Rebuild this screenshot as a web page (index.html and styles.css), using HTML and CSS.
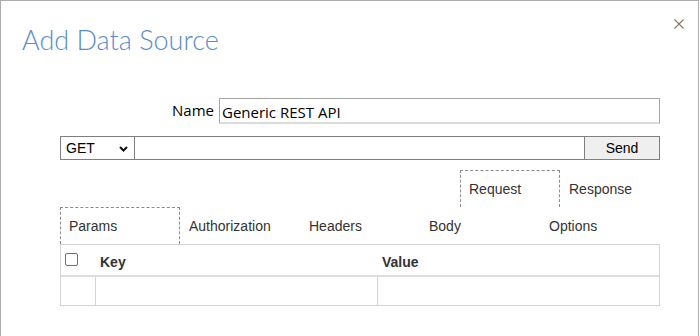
FILE: index.html
```html
<!DOCTYPE html>
<html lang="en">
<head>
<meta charset="utf-8">
<title>Add Data Source</title>
<link rel="stylesheet" href="styles.css">
</head>
<body>
<div class="dialog">
  <div class="header">
    <h1 class="title">Add Data Source</h1>
    <svg class="close" width="10" height="10" viewBox="0 0 10 10" aria-label="Close">
      <path d="M0.5 0.5 L9.5 9.5 M9.5 0.5 L0.5 9.5" stroke="#8a7562" stroke-width="1.1" fill="none"/>
    </svg>
  </div>
  <div class="content">
    <div class="name-row">
      <label class="name-label">Name</label>
      <div class="name-field">Generic REST API</div>
    </div>
    <div class="url-row">
      <div class="method">
        <span class="method-text">GET</span>
        <svg class="chevron" width="9" height="6" viewBox="0 0 9 6">
          <path d="M1 1 L4.5 4.5 L8 1" stroke="#111" stroke-width="2" fill="none"/>
        </svg>
      </div>
      <div class="url-field"></div>
      <div class="send">Send</div>
    </div>
    <div class="pane-tabs">
      <div class="tab tab-small active">Request</div>
      <div class="tab tab-small">Response</div>
    </div>
    <div class="req-tabs">
      <div class="tab active">Params</div>
      <div class="tab">Authorization</div>
      <div class="tab">Headers</div>
      <div class="tab">Body</div>
      <div class="tab">Options</div>
    </div>
    <div class="grid">
      <div class="hcell check-cell"><span class="checkbox"></span></div>
      <div class="hcell">Key</div>
      <div class="hcell">Value</div>
      <div class="dcell first"></div>
      <div class="dcell"></div>
      <div class="dcell"></div>
    </div>
  </div>
</div>
</body>
</html>
```
FILE: styles.css
```css
html, body {
  margin: 0;
  padding: 0;
  background: #ffffff;
}

.dialog {
  width: 699px;
  height: 336px;
  box-sizing: border-box;
  border: 1px solid #ababab;
  border-bottom: none;
  overflow: hidden;
}

.header {
  display: flex;
  justify-content: space-between;
  align-items: flex-start;
  padding: 18px 14px 0 21px;
}

.title {
  margin: 5px 0 0 0;
  font-family: "Lato", "Open Sans", sans-serif;
  font-weight: 300;
  font-size: 27px;
  line-height: 32px;
  color: #5a8dc8;
}

.close {
  display: block;
}

.content {
  margin: 42px 38px 0 59px;
}

.name-row {
  display: flex;
  justify-content: flex-end;
  align-items: flex-start;
  gap: 5px;
  height: 26px;
}

.name-label {
  margin-top: 2px;
  font-family: "Open Sans", sans-serif;
  font-size: 15px;
  line-height: 20px;
  color: #000;
}

.name-field {
  width: 441px;
  height: 26px;
  box-sizing: border-box;
  border: 1px solid #a6a6a6;
  border-bottom: 2px solid #dadada;
  padding: 3px 2px 0 2px;
  font-family: "Open Sans", sans-serif;
  font-size: 15px;
  line-height: 20px;
  color: #000;
}

.url-row {
  display: flex;
  margin-top: 12px;
  height: 24px;
  box-sizing: border-box;
  border: 1px solid #7f7f7f;
  font-family: "Liberation Sans", Arial, sans-serif;
  font-size: 14px;
  color: #000;
}

.method {
  width: 73px;
  display: flex;
  align-items: center;
  justify-content: space-between;
  padding: 0 6px 0 5px;
  box-sizing: border-box;
  line-height: 16px;
}

.chevron {
  display: block;
  margin-top: 1px;
}

.url-field {
  flex: 1;
  border-left: 1px solid #7f7f7f;
}

.send {
  width: 74px;
  border-left: 1px solid #7f7f7f;
  background: #efefef;
  text-align: center;
  line-height: 22px;
}

.pane-tabs,
.req-tabs {
  display: flex;
  font-family: "Liberation Sans", Arial, sans-serif;
  font-size: 14px;
  line-height: 16px;
  color: #333;
}

.pane-tabs {
  justify-content: flex-end;
  margin-top: 10px;
}

.tab {
  width: 120px;
  height: 37px;
  box-sizing: border-box;
  border: 1px dashed transparent;
  border-bottom: none;
  padding: 10px 0 0 8px;
}

.tab-small {
  width: 100px;
}

.tab.active {
  border-color: #8c8c8c;
}

.grid {
  display: grid;
  grid-template-columns: 34px 282px 282px;
  border: 1px solid #d4d4d4;
  font-family: "Liberation Sans", Arial, sans-serif;
  font-size: 14px;
  color: #333;
}

.hcell {
  height: 30px;
  box-sizing: border-box;
  padding: 9px 0 0 5px;
  line-height: 16px;
  font-weight: bold;
  border-bottom: 2px solid #dedede;
}

.hcell.check-cell {
  display: flex;
  align-items: center;
  padding: 0 0 0 4px;
  height: 32px;
}

.hcell {
  height: 32px;
}

.checkbox {
  display: block;
  width: 13px;
  height: 13px;
  box-sizing: border-box;
  border: 1px solid #6f6f6f;
  border-radius: 2px;
  background: #fff;
  margin-top: -2px;
}

.dcell {
  height: 28px;
  border-left: 1px solid #d4d4d4;
}

.dcell.first {
  border-left: none;
}
```
